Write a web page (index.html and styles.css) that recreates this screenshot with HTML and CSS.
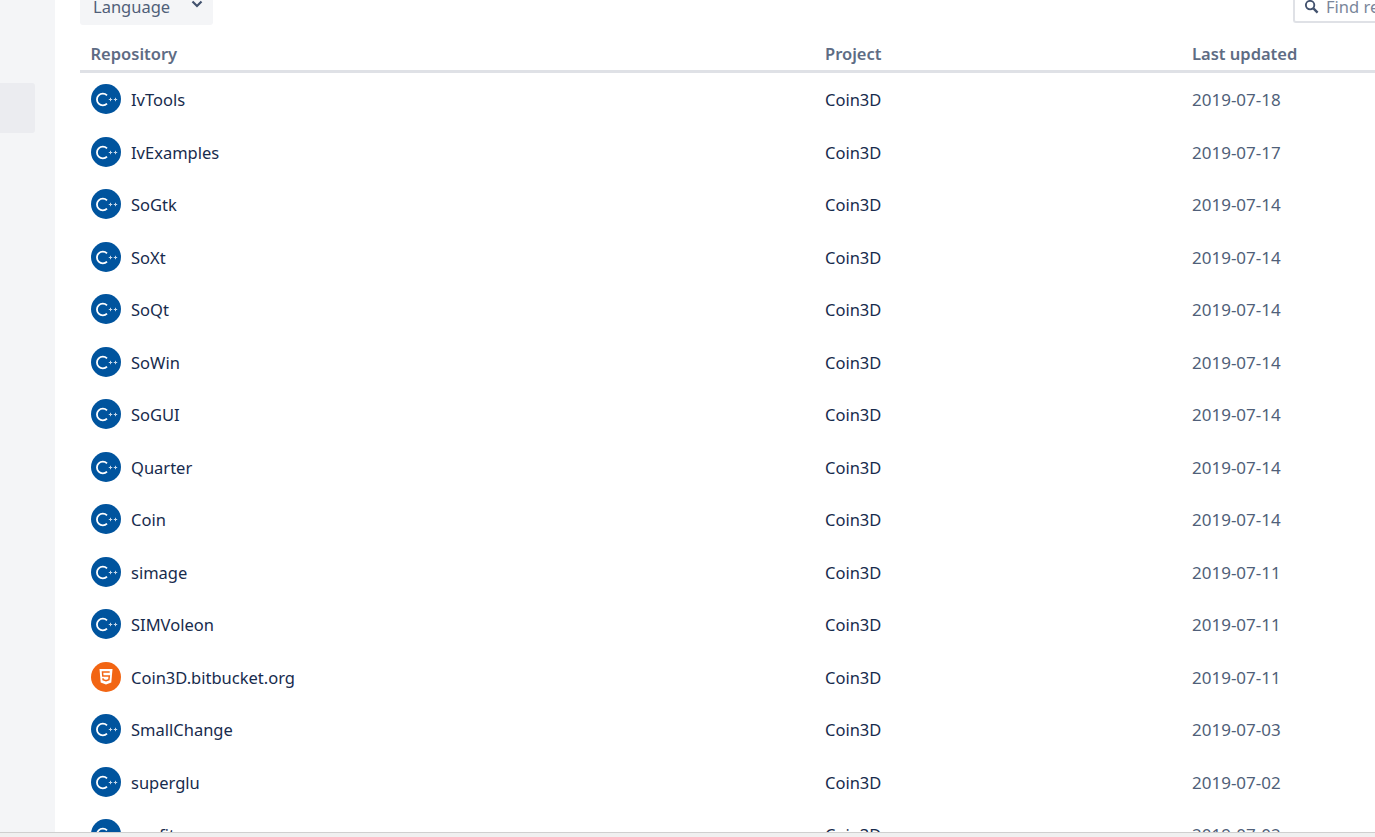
FILE: index.html
```html
<!DOCTYPE html>
<html lang="en">
<head>
<meta charset="utf-8">
<title>Repositories</title>
<link rel="stylesheet" href="styles.css">
</head>
<body>
<div class="page">
  <aside class="sidebar"><div class="nav-active"></div></aside>
  <main class="main">
    <div class="filters">
      <button class="select"><span>Language</span>
        <svg class="chev" viewBox="0 0 12 8" width="12" height="8"><path d="M1.500 1.500 6 6l4.500-4.500" fill="none" stroke="#42526e" stroke-width="2.200"/></svg>
      </button>
      <div class="search">
        <svg class="glass" viewBox="0 0 16 16" width="15" height="15"><circle cx="6.500" cy="6.500" r="4.500" fill="none" stroke="#42526e" stroke-width="2"/><path d="m10 10 4.500 4.500" stroke="#42526e" stroke-width="2.500"/></svg>
        <span>Find repositories</span>
      </div>
    </div>
    <div class="table">
      <div class="row head"><div>Repository</div><div>Project</div><div>Last updated</div></div>
      <div class="row"><div class="name"><svg class="av" viewBox="0 0 30 30"><use href="#cpp"/></svg>IvTools</div><div>Coin3D</div><div class="date">2019-07-18</div></div>
      <div class="row"><div class="name"><svg class="av" viewBox="0 0 30 30"><use href="#cpp"/></svg>IvExamples</div><div>Coin3D</div><div class="date">2019-07-17</div></div>
      <div class="row"><div class="name"><svg class="av" viewBox="0 0 30 30"><use href="#cpp"/></svg>SoGtk</div><div>Coin3D</div><div class="date">2019-07-14</div></div>
      <div class="row"><div class="name"><svg class="av" viewBox="0 0 30 30"><use href="#cpp"/></svg>SoXt</div><div>Coin3D</div><div class="date">2019-07-14</div></div>
      <div class="row"><div class="name"><svg class="av" viewBox="0 0 30 30"><use href="#cpp"/></svg>SoQt</div><div>Coin3D</div><div class="date">2019-07-14</div></div>
      <div class="row"><div class="name"><svg class="av" viewBox="0 0 30 30"><use href="#cpp"/></svg>SoWin</div><div>Coin3D</div><div class="date">2019-07-14</div></div>
      <div class="row"><div class="name"><svg class="av" viewBox="0 0 30 30"><use href="#cpp"/></svg>SoGUI</div><div>Coin3D</div><div class="date">2019-07-14</div></div>
      <div class="row"><div class="name"><svg class="av" viewBox="0 0 30 30"><use href="#cpp"/></svg>Quarter</div><div>Coin3D</div><div class="date">2019-07-14</div></div>
      <div class="row"><div class="name"><svg class="av" viewBox="0 0 30 30"><use href="#cpp"/></svg>Coin</div><div>Coin3D</div><div class="date">2019-07-14</div></div>
      <div class="row"><div class="name"><svg class="av" viewBox="0 0 30 30"><use href="#cpp"/></svg>simage</div><div>Coin3D</div><div class="date">2019-07-11</div></div>
      <div class="row"><div class="name"><svg class="av" viewBox="0 0 30 30"><use href="#cpp"/></svg>SIMVoleon</div><div>Coin3D</div><div class="date">2019-07-11</div></div>
      <div class="row"><div class="name"><svg class="av" viewBox="0 0 30 30"><circle cx="15" cy="15" r="15" fill="#f26513"/><path d="M8.500 7h13l-1.200 13.500L15 22.500l-5.300-2z" fill="#fff"/><path d="M18.700 10h-7.200l.3 4h6.500l-.4 3.800-2.900 1-2.900-1-.1-1.600" fill="none" stroke="#f26513" stroke-width="1.500"/></svg>Coin3D.bitbucket.org</div><div>Coin3D</div><div class="date">2019-07-11</div></div>
      <div class="row"><div class="name"><svg class="av" viewBox="0 0 30 30"><use href="#cpp"/></svg>SmallChange</div><div>Coin3D</div><div class="date">2019-07-03</div></div>
      <div class="row"><div class="name"><svg class="av" viewBox="0 0 30 30"><use href="#cpp"/></svg>superglu</div><div>Coin3D</div><div class="date">2019-07-02</div></div>
      <div class="row"><div class="name"><svg class="av" viewBox="0 0 30 30"><use href="#cpp"/></svg>confit</div><div>Coin3D</div><div class="date">2019-07-02</div></div>
    </div>
  </main>
</div>
<div class="statusbar"></div>
<svg class="defs" width="0" height="0">
  <defs>
    <g id="cpp">
      <circle cx="15" cy="15" r="15" fill="#00549e"/>
      <path d="M16 11.300a5.900 5.900 0 1 0 0 8.400" fill="none" stroke="#fff" stroke-width="1.800"/>
      <path d="M17.800 15.500h3.400M19.500 13.800v3.400M22.800 15.500h3.400M24.500 13.800v3.400" stroke="#c4d6e8" stroke-width="1"/>
    </g>
  </defs>
</svg>
</body>
</html>
```

FILE: styles.css
```css
* { box-sizing: border-box; }
html, body { margin: 0; height: 100%; overflow: hidden; background: #fff; }
body { font-family: "Noto Sans", "Open Sans", sans-serif; font-size: 16.500px; color: #172b4d; }
.page { display: flex; height: 837px; overflow: hidden; }
.sidebar { width: 55px; flex: none; background: #f4f5f7; padding-top: 83px; }
.nav-active { width: 35px; height: 50px; background: #ebecf0; border-radius: 0 3px 3px 0; }
.main { flex: 1; padding-left: 25px; margin-top: -11px; min-width: 0; }
.filters { display: flex; justify-content: space-between; align-items: flex-start; height: 46px; }
.select { display: flex; align-items: center; justify-content: space-between; width: 133px; height: 36px; padding: 0 10px 2px 13px; border: 0; border-radius: 3px; background: #f4f5f7; color: #505f79; font: inherit; }
.chev { margin-top: -4px; }
.search { display: flex; align-items: center; gap: 7px; width: 120px; height: 34px; padding-left: 9px; margin-left: auto; margin-right: -38px; border: 2px solid #dfe1e6; border-right: 0; border-radius: 3px 0 0 3px; color: #7a869a; white-space: nowrap; overflow: hidden; }
.glass { flex: none; }
.table { width: 1295px; }
.row { display: grid; grid-template-columns: 734.500px 367px 1fr; align-items: center; height: 52.500px; padding-left: 10.500px; padding-top: 1px; line-height: 24px; }
.head { height: 38px; margin-bottom: 0.500px; padding-top: 3px; border-bottom: 3px solid #dfe1e6; font-weight: 600; color: #5e6c84; }
.name { display: flex; align-items: center; gap: 10.500px; }
.av { width: 30px; height: 30px; flex: none; margin-top: -2px; }
.date { color: #505f79; font-size: 17px; }
.statusbar { position: fixed; left: 0; right: 0; bottom: 0; height: 5px; background: #f0f0f0; border-top: 1px solid #cfcfcf; }
.defs { position: absolute; }
```
